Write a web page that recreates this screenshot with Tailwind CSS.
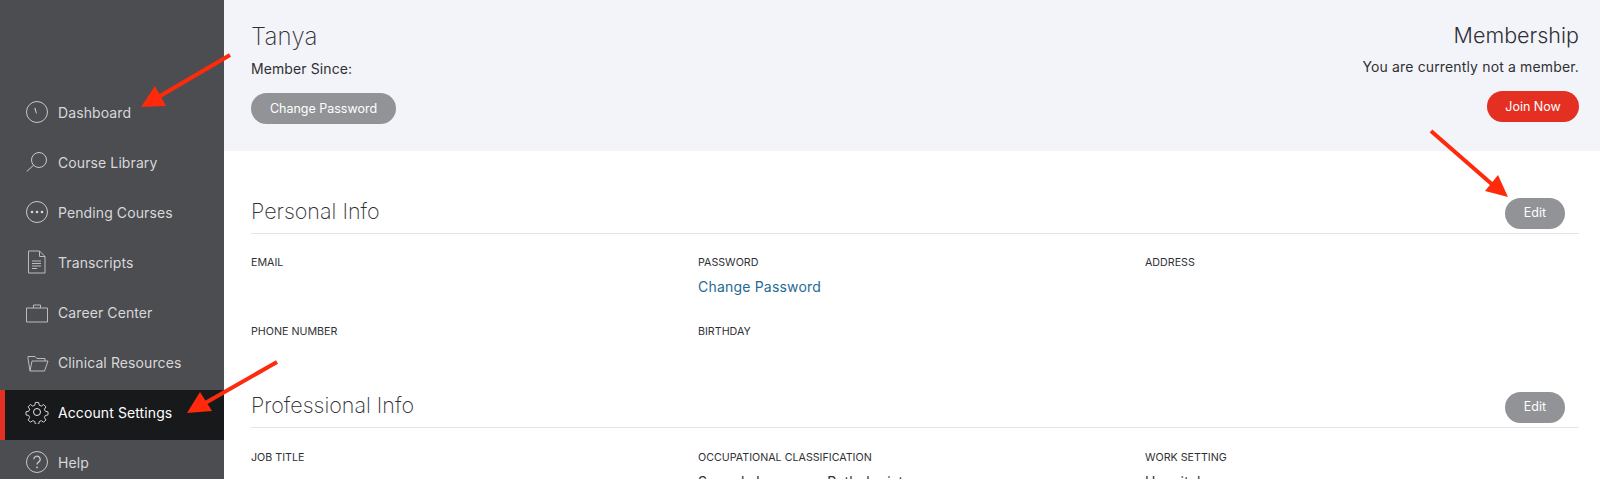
<!DOCTYPE html>
<html lang="en">
  <head>
    <meta charset="UTF-8" />
    <title>Account Settings</title>
    <script src="https://cdn.jsdelivr.net/npm/@tailwindcss/browser@4"></script>
  </head>
  <body class="bg-white text-[#2f3035] font-['Inter',sans-serif] overflow-hidden">
    <div class="relative flex h-[479px] overflow-hidden">
      <!-- sidebar -->
      <aside class="w-[224px] shrink-0 bg-[#4c4d51] pt-[87px] text-[14px] tracking-[0.1px] text-[#d8d8da]">
        <a class="flex h-[50px] items-center pl-[25px] gap-[9px]">
          <svg class="w-6 h-6" viewBox="0 0 24 24" fill="none" stroke="#c9c9cb" stroke-width="1"><circle cx="12" cy="12" r="10.5"/><path d="M9.300 8 10.400 7.800 11.800 13.300 11 13.500z" fill="#d8d8da" stroke="none"/></svg>
          <span>Dashboard</span>
        </a>
        <a class="flex h-[50px] items-center pl-[25px] gap-[9px]">
          <svg class="w-6 h-6" viewBox="0 0 24 24" fill="none" stroke="#c9c9cb" stroke-width="1"><circle cx="14" cy="10" r="7.500"/><path d="M8.600 15.200 1.700 21.500"/></svg>
          <span>Course Library</span>
        </a>
        <a class="flex h-[50px] items-center pl-[25px] gap-[9px]">
          <svg class="w-6 h-6" viewBox="0 0 24 24" fill="none" stroke="#c9c9cb" stroke-width="1"><circle cx="12" cy="12" r="10.500"/><circle cx="7" cy="12" r="1.300" fill="#d8d8da" stroke="none"/><circle cx="12" cy="12" r="1.300" fill="#d8d8da" stroke="none"/><circle cx="17" cy="12" r="1.300" fill="#d8d8da" stroke="none"/></svg>
          <span>Pending Courses</span>
        </a>
        <a class="flex h-[50px] items-center pl-[25px] gap-[9px]">
          <svg class="w-6 h-6" viewBox="0 0 24 24" fill="none" stroke="#bcbcbf" stroke-width="1"><path d="M3.500 1h11l5.500 5.500V23H3.500z"/><path d="M14.500 1v5.500H20"/><path d="M7 11h9M7 13.500h9M7 16h9M7 18.500h5"/></svg>
          <span>Transcripts</span>
        </a>
        <a class="flex h-[50px] items-center pl-[25px] gap-[9px]">
          <svg class="w-6 h-6" viewBox="0 0 24 24" fill="none" stroke="#bcbcbf" stroke-width="1"><path d="M1.500 8h21v14h-21z"/><path d="M8.500 8V5h7v3"/></svg>
          <span>Career Center</span>
        </a>
        <a class="flex h-[50px] items-center pl-[25px] gap-[9px]">
          <svg class="w-6 h-6" viewBox="0 0 24 24" fill="none" stroke="#bcbcbf" stroke-width="1"><path d="M5 21 3 8.500V6.500h7l2 2h8v2.500"/><path d="M7 11h16l-3.500 10H5z"/></svg>
          <span>Clinical Resources</span>
        </a>
        <a class="relative flex h-[50px] mt-[3px] -mb-[3px] pb-[6px] items-center pl-[25px] gap-[9px] bg-[#18191b] text-white">
          <span class="absolute left-0 top-0 h-full w-[5px] bg-[#e33022]"></span>
          <svg class="w-6 h-6" viewBox="0 0 24 24" fill="none" stroke="#e4e4e5" stroke-width="1"><circle cx="12" cy="12" r="3.500"/><path d="M10.200 1.500h3.600l.6 3 2.300 1 2.600-1.700 2.500 2.500-1.700 2.600 1 2.300 3 .6v3.400l-3 .6-1 2.300 1.700 2.600-2.500 2.500-2.600-1.700-2.300 1-.6 3h-3.600l-.6-3-2.300-1-2.600 1.700-2.500-2.500 1.700-2.600-1-2.300-3-.6v-3.400l3-.6 1-2.300-1.700-2.600 2.500-2.500 2.600 1.700 2.300-1z" transform="translate(1.100 1.100) scale(.91)"/></svg>
          <span>Account Settings</span>
        </a>
        <a class="flex h-[50px] items-center pl-[25px] gap-[9px]">
          <svg class="w-6 h-6" viewBox="0 0 24 24" fill="none" stroke="#c9c9cb" stroke-width="1"><circle cx="12" cy="12" r="10.500"/><path d="M8.800 9.300a3.200 3.200 0 1 1 4.800 2.800c-1 .6-1.600 1.200-1.600 2.500" stroke-width="1.300"/><circle cx="12" cy="17.300" r=".9" fill="#d8d8da" stroke="none"/></svg>
          <span>Help</span>
        </a>
      </aside>

      <main class="flex-1 min-w-0">
        <!-- profile header -->
        <header class="flex justify-between h-[151px] bg-[#f3f4f9] pl-[27px] pr-[21px] pt-[20px]">
          <div>
            <h1 class="mt-[1px] text-[24px] leading-[32px] font-extralight tracking-[0.2px]">Tanya</h1>
            <p class="mt-[7px] text-[14px] leading-[17px] tracking-[0.1px]">Member Since:</p>
            <button class="mt-[16px] pt-[1px] h-[31px] w-[145px] rounded-full bg-[#929397] text-[12.500px] text-white">Change Password</button>
          </div>
          <div class="flex flex-col items-end">
            <h2 class="text-[21.500px] leading-[30px] font-light">Membership</h2>
            <p class="mt-[8px] text-[14px] leading-[17px] tracking-[0.15px]">You are currently not a member.</p>
            <button class="mt-[16px] pt-[1px] h-[31px] w-[92px] rounded-full bg-[#e33022] text-[12.500px] text-white">Join Now</button>
          </div>
        </header>

        <div class="pl-[27px] pr-[21px]">
          <!-- personal info -->
          <section class="pt-[47px]">
            <div class="flex items-center justify-between h-[36px] border-b border-[#e4e4e6] pb-[6px] pr-[14px]">
              <h2 class="-mt-[2px] text-[21.500px] font-extralight">Personal Info</h2>
              <button class="mt-[2px] h-[31px] w-[60px] rounded-full bg-[#929397] text-[12.500px] text-white">Edit</button>
            </div>
            <div class="grid grid-cols-[447px_447px_1fr] mt-[22px] text-[10.700px] leading-[14px] uppercase">
              <div class="h-[69px]">Email</div>
              <div class="h-[69px]">
                <div>Password</div>
                <a class="block mt-[8px] text-[14px] leading-[17px] tracking-[0.2px] normal-case text-[#1f6a94]">Change Password</a>
              </div>
              <div class="h-[69px]">Address</div>
              <div>Phone Number</div>
              <div>Birthday</div>
            </div>
          </section>

          <!-- professional info -->
          <section class="pt-[53px]">
            <div class="flex items-center justify-between h-[36px] border-b border-[#e4e4e6] pb-[6px] pr-[14px]">
              <h2 class="-mt-[2px] text-[21.500px] font-extralight">Professional Info</h2>
              <button class="mt-[2px] h-[31px] w-[60px] rounded-full bg-[#929397] text-[12.500px] text-white">Edit</button>
            </div>
            <div class="grid grid-cols-[447px_447px_1fr] mt-[23px] text-[10.700px] leading-[14px] uppercase">
              <div>Job Title</div>
              <div>
                <div>Occupational Classification</div>
                <p class="mt-[8px] text-[14px] leading-[17px] tracking-[0.2px] normal-case">Speech-Language Pathologist</p>
              </div>
              <div>
                <div>Work Setting</div>
                <p class="mt-[8px] text-[14px] leading-[17px] tracking-[0.2px] normal-case">Hospital</p>
              </div>
            </div>
          </section>
        </div>
      </main>

      <!-- red annotation arrows drawn over the screenshot -->
      <svg class="absolute left-0 top-0 pointer-events-none" width="1600" height="479" viewBox="0 0 1600 479" fill="#ff2a0c" stroke="none">
        <path d="M230 55 155 99" stroke="#ff2a0c" stroke-width="4"/>
        <path d="M141 107 155 86 166 106z"/>
        <path d="M277 362 200 406" stroke="#ff2a0c" stroke-width="4"/>
        <path d="M187 413 200 392 212 411z"/>
        <path d="M1431 131 1494 186" stroke="#ff2a0c" stroke-width="4"/>
        <path d="M1508 197 1485 191 1498 175z"/>
      </svg>
    </div>
  </body>
</html>
